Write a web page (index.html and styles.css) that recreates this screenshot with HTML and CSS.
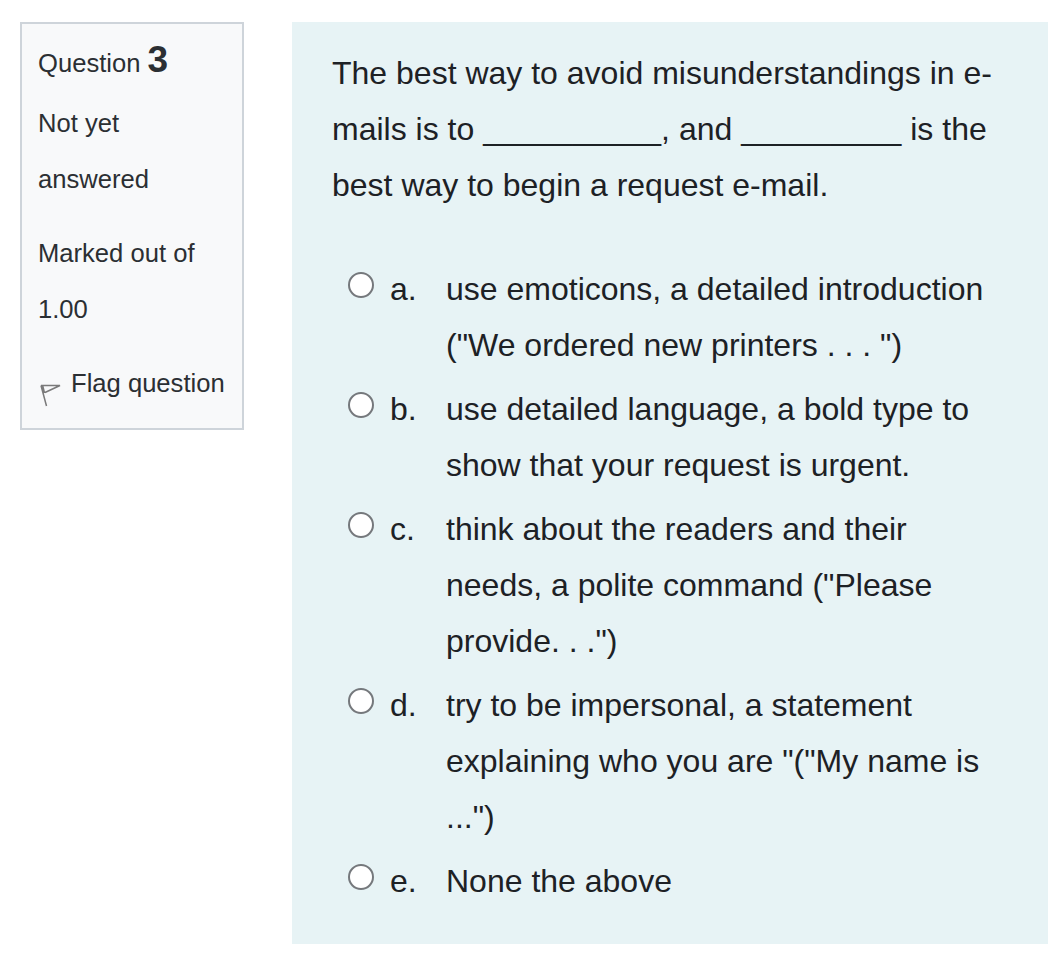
FILE: index.html
```html
<!DOCTYPE html>
<html lang="en">
<head>
    <meta charset="UTF-8">
    <title>Question 3</title>
    <link rel="stylesheet" href="styles.css">
</head>
<body>
    <div class="que">
        <div class="info">
            <h3 class="qno">Question <span class="qnum">3</span></h3>
            <div class="state">Not yet answered</div>
            <div class="grade">Marked out of 1.00</div>
            <div class="flag">
                <svg class="flag-icon" width="24" height="24" viewBox="0 0 24 24"><path d="M3 2.5 L8.5 23 M4.5 2 L6.5 10 M3 2.5 L22 2.5 L7 9.5" fill="none" stroke="#7a7a7a" stroke-width="1.5"/></svg>
                <span>Flag question</span>
            </div>
        </div>
        <div class="content">
            <p class="qtext">The best way to avoid misunderstandings in e-mails is to __________, and _________ is the best way to begin a request e-mail.</p>
            <div class="answer">
                <div class="opt"><span class="radio"></span><span class="letter">a.</span><span class="label">use emoticons, a detailed introduction ("We ordered new printers . . . ")</span></div>
                <div class="opt"><span class="radio"></span><span class="letter">b.</span><span class="label">use detailed language, a bold type to show that your request is urgent.</span></div>
                <div class="opt"><span class="radio"></span><span class="letter">c.</span><span class="label">think about the readers and their needs, a polite command ("Please provide. . .")</span></div>
                <div class="opt"><span class="radio"></span><span class="letter">d.</span><span class="label">try to be impersonal, a statement explaining who you are "("My name is ...")</span></div>
                <div class="opt"><span class="radio"></span><span class="letter">e.</span><span class="label">None the above</span></div>
            </div>
        </div>
    </div>
</body>
</html>
```

FILE: styles.css
```css
body { margin: 0; font-family: "Liberation Sans", Arial, sans-serif; color: #1d2125; background: #fff; }
.que { display: flex; align-items: flex-start; gap: 48px; padding: 22px 8px 0 20px; }
.info { width: 224px; height: 408px; box-sizing: border-box; flex: none; background: #f8f9fa; border: 2px solid #ced4da; padding: 14px 16px 0; font-size: 25.6px; color: #2b2f33; }
.qno { margin: 0; font-size: 25.6px; font-weight: normal; line-height: 44px; }
.qnum { font-size: 37px; font-weight: bold; }
.state { margin-top: 10px; line-height: 56px; width: 150px; }
.grade { margin-top: 18px; line-height: 56px; width: 170px; }
.flag { display: flex; align-items: flex-start; gap: 9px; margin-top: 28px; line-height: 36px; }
.flag-icon { flex: none; margin-top: 18px; }
.content { flex: 1; height: 922px; box-sizing: border-box; background: #e7f3f5; padding: 23px 40px 0; font-size: 32px; }
.qtext { margin: 0; line-height: 56px; }
.answer { margin-top: 48px; }
.opt { display: flex; margin-bottom: 8px; line-height: 56px; }
.radio { width: 26px; height: 26px; flex: none; box-sizing: border-box; border: 2px solid #75787c; border-radius: 50%; background: #fff; margin: 11px 16px 0 16px; }
.letter { width: 56px; flex: none; }
```
